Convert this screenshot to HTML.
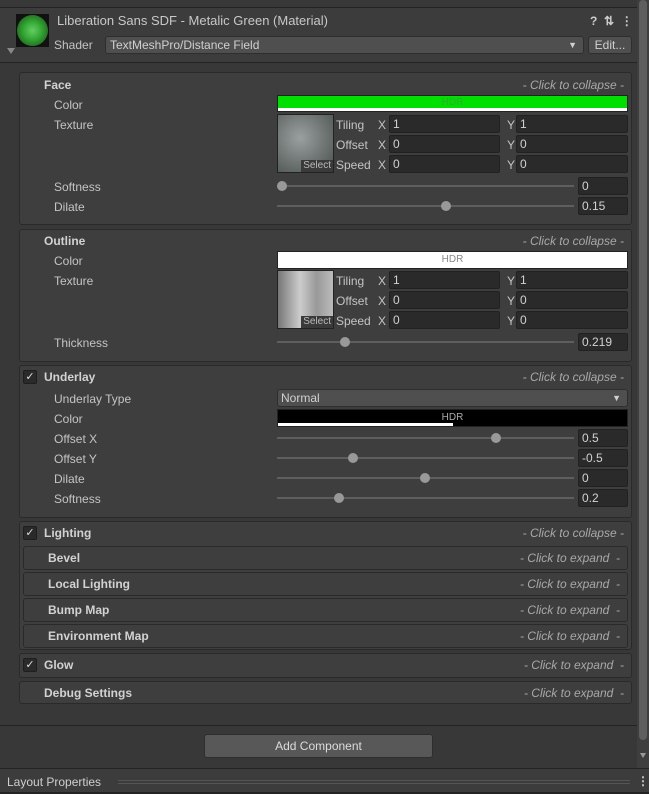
<!DOCTYPE html>
<html><head><style>
*{box-sizing:border-box;margin:0;padding:0}
body{width:649px;height:794px;background:#383838;font-family:"Liberation Sans",sans-serif;font-size:12px;color:#c4c4c4;position:relative;overflow:hidden}
.a{position:absolute}
.lbl{position:absolute;font-size:12px;color:#c4c4c4;line-height:14px}
.hd{position:absolute;font-size:12px;font-weight:bold;color:#d2d2d2;line-height:14px}
.it{position:absolute;font-style:italic;color:#a8a8a8;font-size:12px;line-height:14px;text-align:right}
.panel{position:absolute;background:#3e3e3e;border:1px solid #2a2a2a;border-radius:3px}
.fld{position:absolute;background:#2a2a2a;border:1px solid #212121;border-radius:2px;color:#d2d2d2;font-size:12px;line-height:16px;padding-left:3px;height:18px}
.trk{position:absolute;height:2px;background:#5e5e5e}
.knob{position:absolute;width:10px;height:10px;border-radius:50%;background:#999}
.chk{position:absolute;width:14px;height:14px;background:#2a2a2a;border:1px solid #1e1e1e;border-radius:2px;color:#ddd;font-size:11px;line-height:12px;text-align:center}
.tex{position:absolute;width:57px;height:59px;border:1px solid #222;background:radial-gradient(circle at 40% 40%,#9aa0a0,#6a706e 60%,#4a504e)}
.sel{position:absolute;right:0;bottom:0;background:#3a3a3a;color:#bbb;font-size:10px;padding:0 2px;line-height:12px}
</style></head><body>
<!-- header -->
<div class="a" style="left:0;top:0;width:649px;height:8px;background:#383838;border-bottom:1px solid #232323"></div>
<div class="a" style="left:0;top:8px;width:637px;height:55px;background:#3c3c3c;border-bottom:1px solid #232323"></div>
<div class="a" style="left:16px;top:14px;width:33px;height:33px;background:#111"><div style="position:absolute;left:1px;top:1px;width:31px;height:31px;border-radius:50%;background:radial-gradient(circle,#6c6 0,#3a3 40%,#262 80%);"></div></div>
<div class="a" style="left:7px;top:48px;width:0;height:0;border-left:4px solid transparent;border-right:4px solid transparent;border-top:6px solid #888"></div>
<div class="lbl" style="left:57px;top:14px;font-size:13px;color:#c8c8c8">Liberation Sans SDF - Metalic Green (Material)</div>
<div class="lbl" style="left:590px;top:14px;color:#ccc;font-weight:bold">?&nbsp;&nbsp;⇅&nbsp;&nbsp;⋮</div>
<div class="lbl" style="left:54px;top:38px">Shader</div>
<div class="a" style="left:105px;top:36px;width:479px;height:18px;background:#4f4f4f;border:1px solid #2e2e2e;border-radius:3px;padding-left:4px;line-height:16px;color:#d0d0d0">TextMeshPro/Distance Field<span style="position:absolute;right:6px;top:0;font-size:9px">▼</span></div>
<div class="a" style="left:588px;top:36px;width:44px;height:18px;background:#4f4f4f;border:1px solid #2e2e2e;border-radius:3px;line-height:16px;text-align:center;color:#d0d0d0">Edit...</div>

<!-- scrollbar -->
<div class="a" style="left:637px;top:0;width:12px;height:768px;background:#3e3e3e"></div>
<div class="a" style="left:639px;top:0;width:8px;height:740px;background:#5e5e5e;border-radius:4px"></div>
<div class="a" style="left:640px;top:753px;border-left:3px solid transparent;border-right:3px solid transparent;border-top:5px solid #999"></div>

<!-- Face -->
<div class="panel" style="left:19px;top:72px;width:613px;height:153px"></div>
<div class="hd" style="left:44px;top:78px">Face</div>
<div class="it" style="left:420px;top:78px;width:204px">- Click to collapse -</div>
<div class="lbl" style="left:54px;top:98px">Color</div>
<div class="a" style="left:277px;top:95px;width:351px;height:17px;background:#00e000;border:1px solid #222"><div style="position:absolute;left:0;bottom:0;width:100%;height:3px;background:#fff"></div><div style="position:absolute;width:100%;text-align:center;top:0;font-size:10px;color:#3a3;line-height:13px">HDR</div></div>
<div class="lbl" style="left:54px;top:118px">Texture</div>
<div class="tex" style="left:277px;top:114px"><div class="sel">Select</div></div>
<div class="lbl" style="left:336px;top:118px">Tiling</div><div class="lbl" style="left:378px;top:118px">X</div><div class="fld" style="left:389px;top:115px;width:111px">1</div><div class="lbl" style="left:507px;top:118px">Y</div><div class="fld" style="left:516px;top:115px;width:112px">1</div>
<div class="lbl" style="left:336px;top:138px">Offset</div><div class="lbl" style="left:378px;top:138px">X</div><div class="fld" style="left:389px;top:135px;width:111px">0</div><div class="lbl" style="left:507px;top:138px">Y</div><div class="fld" style="left:516px;top:135px;width:112px">0</div>
<div class="lbl" style="left:336px;top:158px">Speed</div><div class="lbl" style="left:378px;top:158px">X</div><div class="fld" style="left:389px;top:155px;width:111px">0</div><div class="lbl" style="left:507px;top:158px">Y</div><div class="fld" style="left:516px;top:155px;width:112px">0</div>
<div class="lbl" style="left:54px;top:180px">Softness</div><div class="trk" style="left:277px;top:185px;width:297px"></div><div class="knob" style="left:277px;top:181px"></div><div class="fld" style="left:578px;top:177px;width:50px">0</div>
<div class="lbl" style="left:54px;top:200px">Dilate</div><div class="trk" style="left:277px;top:205px;width:297px"></div><div class="knob" style="left:441px;top:201px"></div><div class="fld" style="left:578px;top:197px;width:50px">0.15</div>

<!-- Outline -->
<div class="panel" style="left:19px;top:229px;width:613px;height:133px"></div>
<div class="hd" style="left:44px;top:234px">Outline</div>
<div class="it" style="left:420px;top:234px;width:204px">- Click to collapse -</div>
<div class="lbl" style="left:54px;top:254px">Color</div>
<div class="a" style="left:277px;top:251px;width:351px;height:18px;background:#fff;border:1px solid #222;text-align:center;font-size:10px;color:#888;line-height:16px">HDR</div>
<div class="lbl" style="left:54px;top:274px">Texture</div>
<div class="tex" style="left:277px;top:270px;background:linear-gradient(90deg,#777,#ccc 40%,#999 70%,#bbb)"><div class="sel">Select</div></div>
<div class="lbl" style="left:336px;top:274px">Tiling</div><div class="lbl" style="left:378px;top:274px">X</div><div class="fld" style="left:389px;top:271px;width:111px">1</div><div class="lbl" style="left:507px;top:274px">Y</div><div class="fld" style="left:516px;top:271px;width:112px">1</div>
<div class="lbl" style="left:336px;top:294px">Offset</div><div class="lbl" style="left:378px;top:294px">X</div><div class="fld" style="left:389px;top:291px;width:111px">0</div><div class="lbl" style="left:507px;top:294px">Y</div><div class="fld" style="left:516px;top:291px;width:112px">0</div>
<div class="lbl" style="left:336px;top:314px">Speed</div><div class="lbl" style="left:378px;top:314px">X</div><div class="fld" style="left:389px;top:311px;width:111px">0</div><div class="lbl" style="left:507px;top:314px">Y</div><div class="fld" style="left:516px;top:311px;width:112px">0</div>
<div class="lbl" style="left:54px;top:336px">Thickness</div><div class="trk" style="left:277px;top:341px;width:297px"></div><div class="knob" style="left:340px;top:337px"></div><div class="fld" style="left:578px;top:333px;width:50px">0.219</div>

<!-- Underlay -->
<div class="panel" style="left:19px;top:365px;width:613px;height:153px"></div>
<div class="chk" style="left:23px;top:370px">✓</div>
<div class="hd" style="left:44px;top:370px">Underlay</div>
<div class="it" style="left:420px;top:370px;width:204px">- Click to collapse -</div>
<div class="lbl" style="left:54px;top:392px">Underlay Type</div>
<div class="a" style="left:277px;top:389px;width:351px;height:18px;background:#4f4f4f;border:1px solid #2e2e2e;border-radius:3px;padding-left:3px;line-height:16px;color:#d0d0d0">Normal<span style="position:absolute;right:6px;font-size:9px">▼</span></div>
<div class="lbl" style="left:54px;top:412px">Color</div>
<div class="a" style="left:277px;top:409px;width:351px;height:18px;background:#000;border:1px solid #222"><div style="position:absolute;left:0;bottom:0;width:175px;height:3px;background:#fff"></div><div style="position:absolute;width:100%;text-align:center;font-size:10px;color:#aaa;line-height:16px">HDR</div></div>
<div class="lbl" style="left:54px;top:432px">Offset X</div><div class="trk" style="left:277px;top:437px;width:297px"></div><div class="knob" style="left:491px;top:433px"></div><div class="fld" style="left:578px;top:429px;width:50px">0.5</div>
<div class="lbl" style="left:54px;top:452px">Offset Y</div><div class="trk" style="left:277px;top:457px;width:297px"></div><div class="knob" style="left:348px;top:453px"></div><div class="fld" style="left:578px;top:449px;width:50px">-0.5</div>
<div class="lbl" style="left:54px;top:472px">Dilate</div><div class="trk" style="left:277px;top:477px;width:297px"></div><div class="knob" style="left:420px;top:473px"></div><div class="fld" style="left:578px;top:469px;width:50px">0</div>
<div class="lbl" style="left:54px;top:492px">Softness</div><div class="trk" style="left:277px;top:497px;width:297px"></div><div class="knob" style="left:334px;top:493px"></div><div class="fld" style="left:578px;top:489px;width:50px">0.2</div>

<!-- Lighting -->
<div class="panel" style="left:19px;top:521px;width:613px;height:129px"></div>
<div class="chk" style="left:23px;top:526px">✓</div>
<div class="hd" style="left:44px;top:526px">Lighting</div>
<div class="it" style="left:420px;top:526px;width:204px">- Click to collapse -</div>
<div class="panel" style="left:23px;top:546px;width:605px;height:24px"></div><div class="hd" style="left:48px;top:551px">Bevel</div><div class="it" style="left:420px;top:551px;width:200px">- Click to expand&nbsp; -</div>
<div class="panel" style="left:23px;top:572px;width:605px;height:24px"></div><div class="hd" style="left:48px;top:577px">Local Lighting</div><div class="it" style="left:420px;top:577px;width:200px">- Click to expand&nbsp; -</div>
<div class="panel" style="left:23px;top:598px;width:605px;height:24px"></div><div class="hd" style="left:48px;top:603px">Bump Map</div><div class="it" style="left:420px;top:603px;width:200px">- Click to expand&nbsp; -</div>
<div class="panel" style="left:23px;top:624px;width:605px;height:24px"></div><div class="hd" style="left:48px;top:629px">Environment Map</div><div class="it" style="left:420px;top:629px;width:200px">- Click to expand&nbsp; -</div>

<!-- Glow/Debug -->
<div class="panel" style="left:19px;top:653px;width:613px;height:25px"></div>
<div class="chk" style="left:23px;top:658px">✓</div>
<div class="hd" style="left:44px;top:658px">Glow</div><div class="it" style="left:420px;top:658px;width:204px">- Click to expand&nbsp; -</div>
<div class="panel" style="left:19px;top:681px;width:613px;height:23px"></div>
<div class="hd" style="left:44px;top:686px">Debug Settings</div><div class="it" style="left:420px;top:686px;width:204px">- Click to expand&nbsp; -</div>

<div class="a" style="left:0;top:725px;width:637px;height:1px;background:#232323"></div>
<div class="a" style="left:204px;top:734px;width:229px;height:24px;background:#585858;border:1px solid #2e2e2e;border-radius:3px;text-align:center;line-height:22px;color:#dcdcdc">Add Component</div>

<!-- bottom bar -->
<div class="a" style="left:0;top:768px;width:649px;height:26px;background:#3c3c3c;border-top:1px solid #232323;border-bottom:2px solid #232323"></div>
<div class="lbl" style="left:7px;top:775px;color:#cfcfcf">Layout Properties</div>
<div class="a" style="left:118px;top:780px;width:390px;height:4px;border-top:1px solid #555;border-bottom:1px solid #555"></div>
<div class="a" style="left:119px;top:780px;width:388px;height:4px;border-top:1px solid #555;border-bottom:1px solid #555;margin-left:0"></div>
<div class="a" style="left:508px;top:780px;width:122px;height:4px;border-top:1px solid #555;border-bottom:1px solid #555"></div>
<div class="lbl" style="left:637px;top:774px;color:#ccc;font-weight:bold">⋮</div>
</body></html>
